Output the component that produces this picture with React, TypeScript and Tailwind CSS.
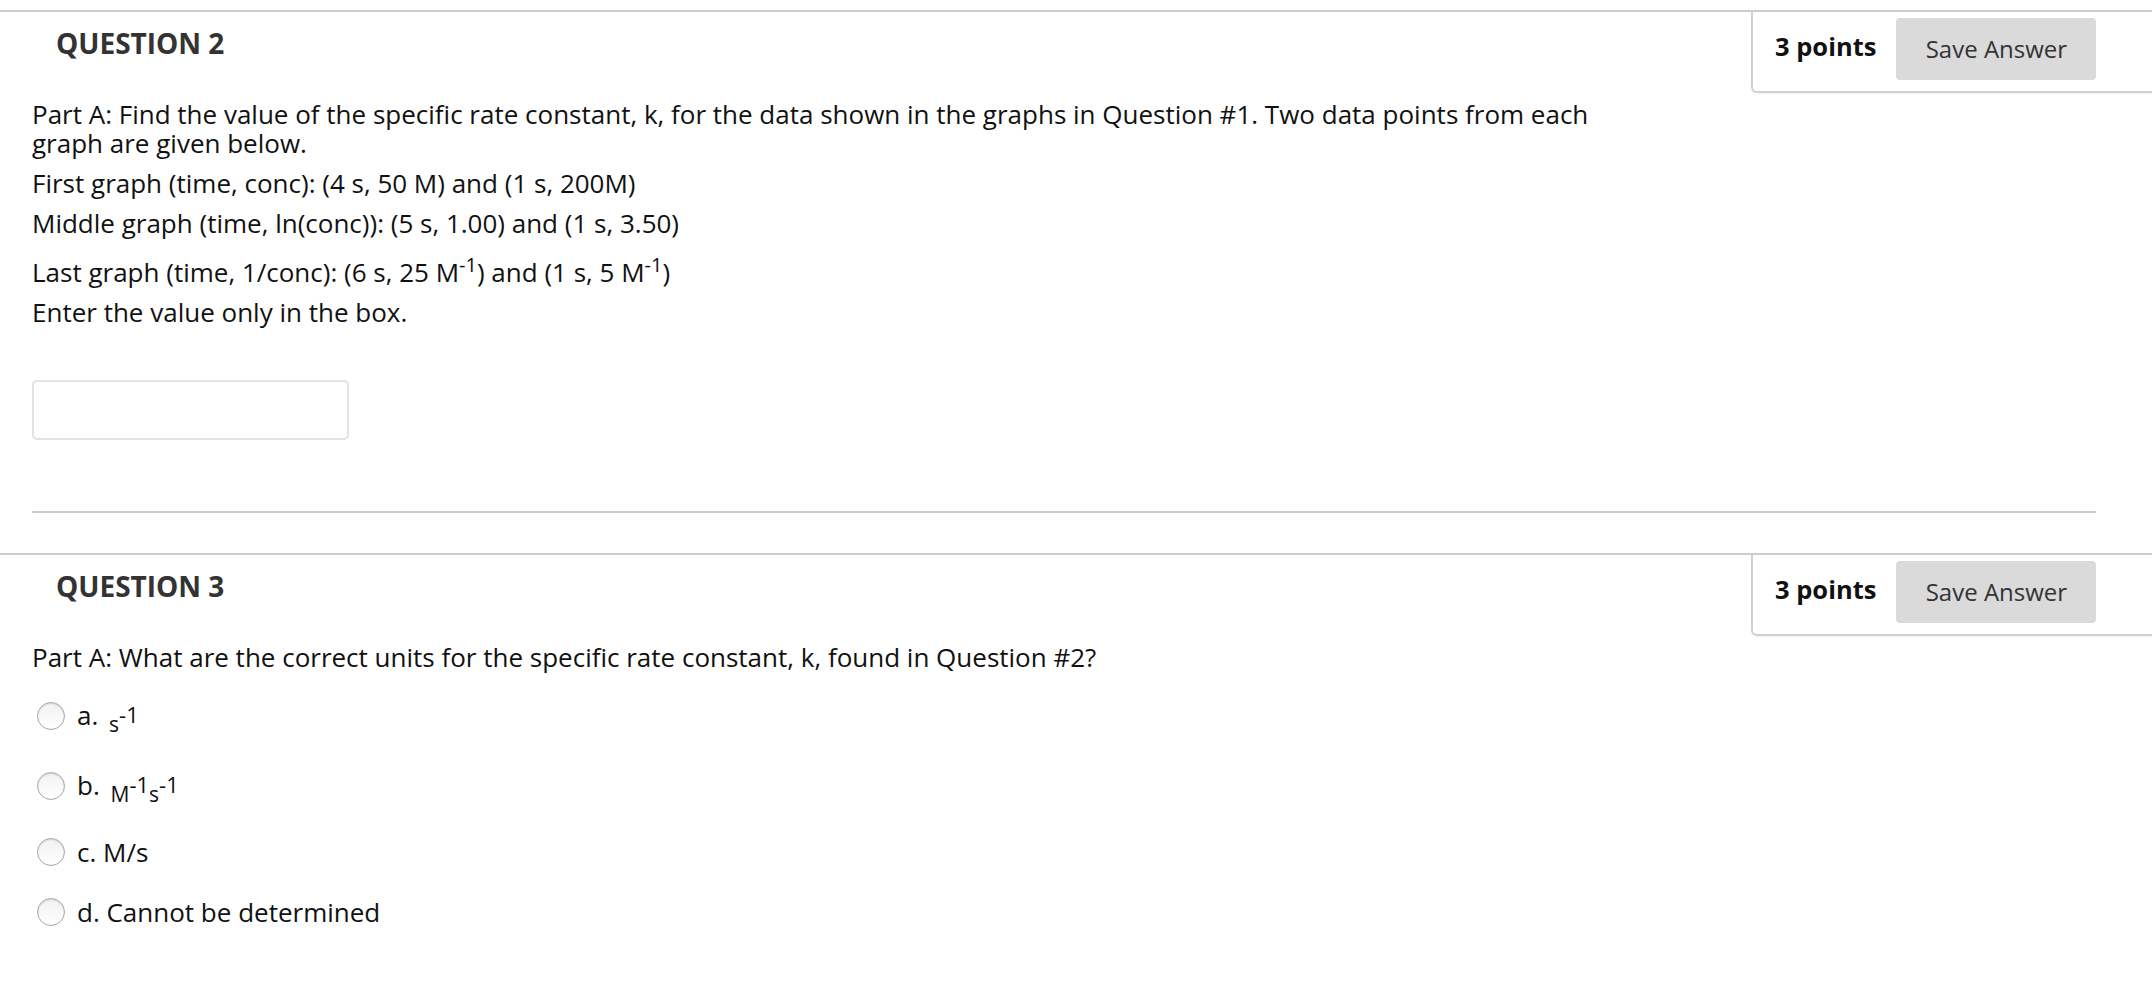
import React from "react";

const font = { fontFamily: '"Open Sans", "Noto Sans", Arial, sans-serif' };

function PointsBox() {
  return (
    <div className="flex h-[81px] w-[401px] shrink-0 items-start gap-[20px] rounded-bl-md border-b-2 border-l-2 border-[#d0d0d0] pl-[22px] pt-[6px] shadow-[0_1px_2px_rgba(0,0,0,0.06)]">
      <span className="-mt-[3px] text-[25.5px] font-bold leading-[62px] text-[#111]">3 points</span>
      <button className="h-[62px] w-[200px] rounded-[4px] bg-[#dadada] text-[24px] text-[#333]">
        Save Answer
      </button>
    </div>
  );
}

function QuestionHeader({ title }: { title: string }) {
  return (
    <div className="flex items-start justify-between border-t-2 border-[#cccccc]">
      <h2 className="pl-[56px] pt-[10px] text-[28px] font-bold text-[#333]">{title}</h2>
      <PointsBox />
    </div>
  );
}

function Radio({ children, className }: { children: React.ReactNode; className?: string }) {
  return (
    <label className={"flex h-[36px] items-center gap-3 pl-[37px] " + (className ?? "")}>
      <span className="h-[28px] w-[28px] shrink-0 rounded-full border border-[#a8a8a8] bg-gradient-to-b from-[#f2f2f2] to-white shadow-[inset_0_1px_2px_rgba(0,0,0,0.12)]" />
      <span className="text-[26px] leading-[36px] text-[#111]">{children}</span>
    </label>
  );
}

export default function App() {
  return (
    <main className="min-h-screen bg-white pt-[10px]" style={font}>
      {/* question 2 */}
      <section>
        <QuestionHeader title="QUESTION 2" />
        <div className="pl-[32px] pr-[56px]">
          <div className="max-w-[1600px] pt-[7px] text-[26px] leading-[29px] text-[#111]">
            <p>
              Part A: Find the value of the specific rate constant, k, for the data shown in the graphs in
              Question #1. Two data points from each graph are given below.
            </p>
            <p className="mt-[11px]">First graph (time, conc): (4 s, 50 M) and (1 s, 200M)</p>
            <p className="mt-[11px]">Middle graph (time, ln(conc)): (5 s, 1.00) and (1 s, 3.50)</p>
            <p className="mt-[11px] pt-[9px]">
              Last graph (time, 1/conc): (6 s, 25 M<sup className="text-[20px]">-1</sup>) and (1 s, 5 M
              <sup className="text-[20px]">-1</sup>)
            </p>
            <p className="mt-[11px]">Enter the value only in the box.</p>
          </div>
          <input
            type="text"
            className="mt-[53px] block h-[60px] w-[317px] rounded-[5px] border-2 border-[#e2e2e2] bg-white"
          />
          <div className="mt-[71px] border-t-2 border-[#cccccc]" />
        </div>
      </section>

      {/* question 3 */}
      <section className="mt-[40px]">
        <QuestionHeader title="QUESTION 3" />
        <div className="pl-[32px] pr-[56px]">
          <p className="pt-[7px] text-[26px] leading-[29px] text-[#111]">
            Part A: What are the correct units for the specific rate constant, k, found in Question #2?
          </p>
        </div>
        <div className="mt-[26px] flex flex-col">
          <Radio className="mb-[34px]">
            a. <span className="relative top-[7px] ml-[4px] text-[21px]">s</span>
            <sup className="relative -top-[2px] text-[22px]">-1</sup>
          </Radio>
          <Radio className="mb-[30px]">
            b. <span className="relative top-[7px] ml-[4px] text-[21px]">M</span>
            <sup className="relative -top-[2px] text-[22px]">-1</sup>
            <span className="relative top-[7px] text-[21px]">s</span>
            <sup className="relative -top-[2px] text-[22px]">-1</sup>
          </Radio>
          <Radio className="mb-[24px]">c. M/s</Radio>
          <Radio>d. Cannot be determined</Radio>
        </div>
      </section>
    </main>
  );
}
